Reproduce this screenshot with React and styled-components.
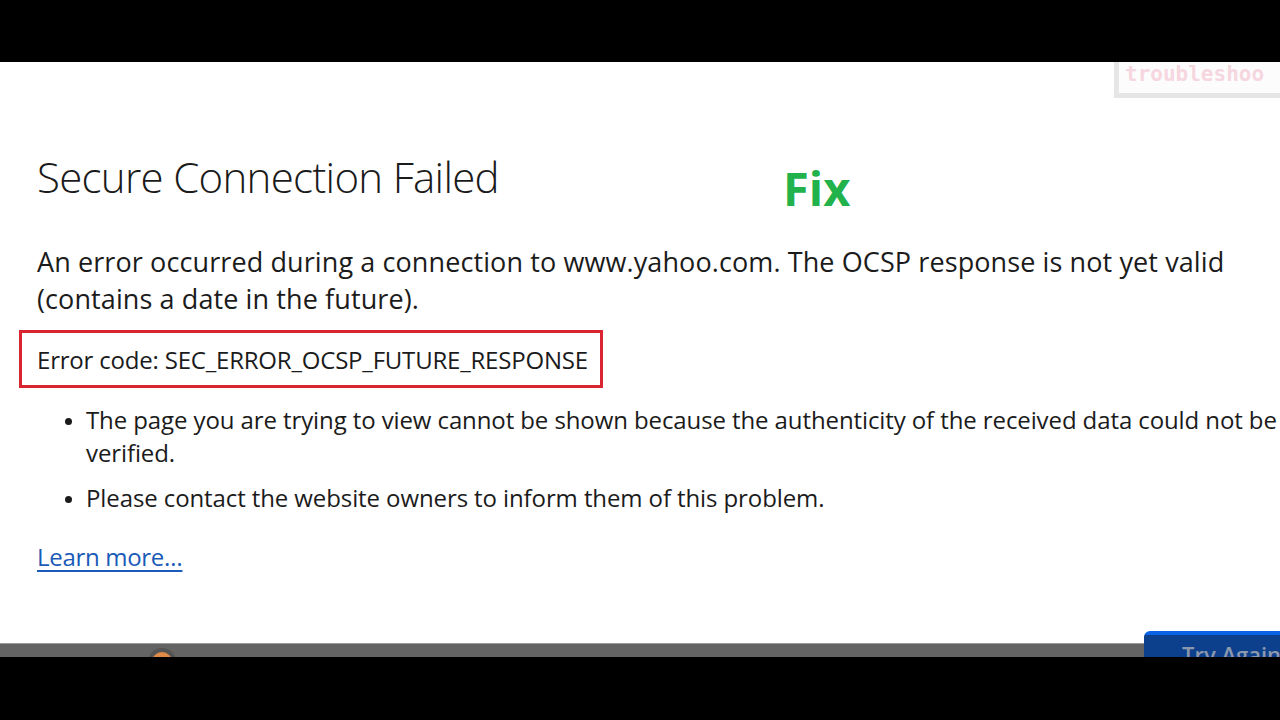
import React from 'react'
import styled, { createGlobalStyle } from 'styled-components'

const Global = createGlobalStyle`
  html, body { margin: 0; padding: 0; background: #000; }
  body { font-family: "Open Sans", "Noto Sans", sans-serif; color: #1b1b1b; }
`

const Frame = styled.div`
  width: 1280px;
  height: 720px;
  background: #000;
  display: flex;
  flex-direction: column;
  overflow: hidden;
`

const Letterbox = styled.div`
  height: ${p => p.h}px;
  background: #000;
  flex-shrink: 0;
`

const Screen = styled.div`
  position: relative;
  height: 595px;
  flex-shrink: 0;
  background: #fff;
  overflow: hidden;
  padding: 0 0 0 37px;
  box-sizing: border-box;
`

const Watermark = styled.div`
  position: absolute;
  top: 0;
  right: 0;
  width: 166px;
  height: 36px;
  border-left: 5px solid #e6e6e6;
  border-bottom: 5px solid #e6e6e6;
  background: #fcfcfc;
  font-family: "DejaVu Sans Mono", monospace;
  font-weight: bold;
  font-size: 21px;
  color: #f6d6df;
  padding: 0 0 0 6px;
  line-height: 24px;
  box-sizing: border-box;
  white-space: nowrap;
`

const TitleRow = styled.div`
  display: flex;
  align-items: flex-start;
  margin-top: 87px;
  height: 60px;
`

const Title = styled.h1`
  margin: 0;
  font-weight: 300;
  font-size: 42px;
  line-height: 56px;
  letter-spacing: -0.7px;
  width: 746px;
  white-space: nowrap;
`

const Fix = styled.span`
  color: #22b24c;
  font-weight: 700;
  font-size: 47px;
  line-height: 56px;
  margin-top: 11px;
`

const Para = styled.p`
  margin: 34px 0 0;
  font-size: 27px;
  line-height: 37px;
  letter-spacing: 0.1px;
  white-space: nowrap;
`

const CodeBox = styled.div`
  margin: 13px 0 0 -18px;
  width: 584px;
  height: 58px;
  border: 3px solid #d92432;
  box-sizing: border-box;
  display: flex;
  align-items: center;
  padding-left: 15px;
  font-size: 24px;
  letter-spacing: -0.2px;
  white-space: nowrap;
`

const List = styled.ul`
  margin: 15px 0 0;
  padding: 0 0 0 49px;
  font-size: 24px;
  line-height: 33px;
  letter-spacing: -0.1px;
  white-space: nowrap;

  li { margin-bottom: 12px; }
  li::marker { font-size: 20px; }
`

const LearnMore = styled.a`
  display: inline-block;
  margin-top: 14px;
  font-size: 24px;
  line-height: 33px;
  letter-spacing: -0.3px;
  color: #1a5ab8;
  text-decoration: underline;
  text-underline-offset: 4px;
`

const BottomBar = styled.div`
  position: absolute;
  left: 0;
  right: 0;
  bottom: 0;
  height: 13px;
  background: #646464;
  border-top: 1px solid #9a9a9a;
`

const Avatar = styled.div`
  position: absolute;
  left: 152px;
  top: 8px;
  width: 20px;
  height: 20px;
  border-radius: 50%;
  background: #e08a4a;
  box-shadow: 0 0 0 4px #545454;
`

const TryAgain = styled.button`
  position: absolute;
  right: 0;
  bottom: 0;
  width: 136px;
  height: 26px;
  border: none;
  border-top-left-radius: 6px;
  background: linear-gradient(#0a63e6 0 4px, #0c3f8c 4px);
  color: #8c98ab;
  font-family: "Open Sans", sans-serif;
  font-size: 22px;
  font-weight: 600;
  text-align: left;
  padding: 8px 0 0 38px;
  line-height: 30px;
  overflow: hidden;
  white-space: nowrap;
`

export default function App() {
  return (
    <Frame>
      <Global />
      <Letterbox h={62} />
      <Screen>
        <Watermark>troubleshoo</Watermark>
        <TitleRow>
          <Title>Secure Connection Failed</Title>
          <Fix>Fix</Fix>
        </TitleRow>
        <Para>
          An error occurred during a connection to www.yahoo.com. The OCSP response is not yet valid
          <br />
          (contains a date in the future).
        </Para>
        <CodeBox>Error code: SEC_ERROR_OCSP_FUTURE_RESPONSE</CodeBox>
        <List>
          <li>
            The page you are trying to view cannot be shown because the authenticity of the received data could not be
            <br />
            verified.
          </li>
          <li>Please contact the website owners to inform them of this problem.</li>
        </List>
        <LearnMore href="#">Learn more…</LearnMore>
        <BottomBar>
          <Avatar />
        </BottomBar>
        <TryAgain>Try Again</TryAgain>
      </Screen>
      <Letterbox h={63} />
    </Frame>
  )
}
